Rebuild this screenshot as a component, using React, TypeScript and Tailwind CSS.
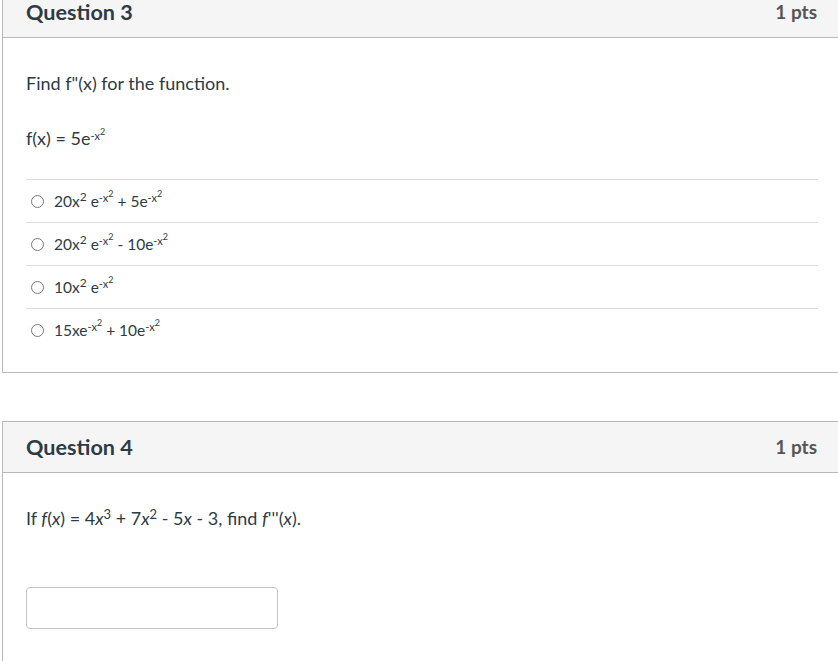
import React from "react";

const font = { fontFamily: "Lato, 'Open Sans', sans-serif" };

function Exp({ children, size = "text-[11px]" }: { children: React.ReactNode; size?: string }) {
  return <sup className={size}>{children}</sup>;
}

function ENegX2() {
  return (
    <>
      e
      <Exp>
        -x<sup className="text-[9px]">2</sup>
      </Exp>
    </>
  );
}

function Header({ title }: { title: string }) {
  return (
    <div className="flex h-[51px] items-center justify-between border-b border-[#b9b9b9] bg-[#f5f5f5] pl-[23px] pr-[25px]">
      <h2 className="text-[21.6px] font-bold text-[#2d3b45]">{title}</h2>
      <span className="text-[19px] font-bold text-[#555555]">1 pts</span>
    </div>
  );
}

const sq = "text-[12px]";

const answers: React.ReactNode[] = [
  <>20x<Exp size={sq}>2</Exp> <ENegX2 /> + 5<ENegX2 /></>,
  <>20x<Exp size={sq}>2</Exp> <ENegX2 /> - 10<ENegX2 /></>,
  <>10x<Exp size={sq}>2</Exp> <ENegX2 /></>,
  <>15x<ENegX2 /> + 10<ENegX2 /></>,
];

export default function App() {
  return (
    <div className="h-[661px] w-[838px] overflow-hidden bg-white text-[#2d3b45]" style={font}>
      <div className="ml-[2px] mt-[-14px] w-[841px] border border-[#b9b9b9]">
        <Header title="Question 3" />
        <div className="pb-[21px] pl-[23px] pr-[24px] pt-[33px] text-[18px] leading-6">
          <p>Find f"(x) for the function.</p>
          <p className="mt-[31px]">
            f(x) = 5<ENegX2 />
          </p>
          <div className="mt-[29px]">
            {answers.map((a, i) => (
              <label key={i} className="flex h-[43px] items-center border-t border-[#dddddd] text-[15.5px]">
                <span className="ml-[5px] mr-[10px] h-[13px] w-[13px] shrink-0 rounded-full border border-[#7a7a7a] bg-white" />
                <span>{a}</span>
              </label>
            ))}
          </div>
        </div>
      </div>

      <div className="ml-[2px] mt-[48px] w-[841px] border border-[#b9b9b9]">
        <Header title="Question 4" />
        <div className="pl-[23px] pr-[24px] pt-[33px] pb-[40px] text-[18px] leading-6">
          <p>
            If <i>f</i>(<i>x</i>) = 4<i>x</i><Exp size="text-[13px]">3</Exp> + 7<i>x</i><Exp size="text-[13px]">2</Exp> - 5<i>x</i> - 3, find <i>f</i>'''(<i>x</i>).
          </p>
          <input
            type="text"
            className="mt-[57px] h-[42px] w-[252px] rounded-[4px] border border-[#c7c7c7] px-2 outline-none"
          />
        </div>
      </div>
    </div>
  );
}
